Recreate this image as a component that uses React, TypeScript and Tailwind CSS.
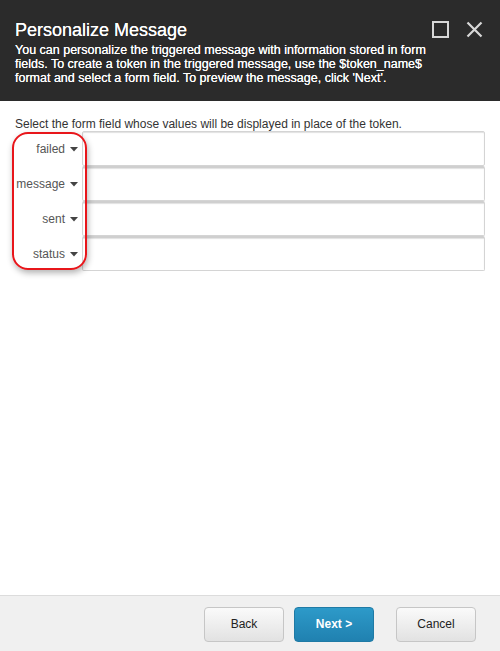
const fields = ["failed", "message", "sent", "status"];

function Caret() {
  return (
    <svg width="8" height="5" viewBox="0 0 8 5" className="ml-[5px] mt-[2px]">
      <path d="M0 0 L8 0 L4 4.5 Z" fill="#444" />
    </svg>
  );
}

export default function App() {
  return (
    <div
      className="w-[500px] h-[651px] flex flex-col bg-white overflow-hidden"
      style={{ fontFamily: '"Liberation Sans", Arial, sans-serif' }}
    >
      <header className="h-[101px] bg-[#2b2b2b] px-[15px] pt-[18px] relative shrink-0">
        <h1 className="text-[18px] leading-[24px] text-white [text-shadow:0_0_0.4px_#fff]">Personalize Message</h1>
        <p className="text-[12.5px] leading-[14px] text-white mt-[1px] w-[450px] [text-shadow:0_0_0.4px_#fff]">
          You can personalize the triggered message with information stored in form
          <br />
          fields. To create a token in the triggered message, use the $token_name$
          <br />
          format and select a form field. To preview the message, click 'Next'.
        </p>
        <div className="absolute top-[21px] right-[17px] flex items-center gap-[17px]">
          <svg width="17" height="17" viewBox="0 0 17 17">
            <rect x="1" y="1" width="15" height="15" fill="none" stroke="#d8d8d8" strokeWidth="2" />
          </svg>
          <svg width="17" height="17" viewBox="0 0 17 17">
            <path d="M1.5 1.5 L15.5 15.5 M15.5 1.5 L1.5 15.5" stroke="#d8d8d8" strokeWidth="2.2" />
          </svg>
        </div>
      </header>

      <main className="flex-1 px-[15px] pt-[16px] relative">
        <p className="text-[12px] leading-[14px] text-[#333]">
          Select the form field whose values will be displayed in place of the token.
        </p>
        <div className="flex flex-col">
          {fields.map((f, i) => (
            <div key={f} className="flex items-stretch h-[35px]">
              <div className="w-[67px] flex items-center justify-end pr-[4px] text-[12px] text-[#555]">
                {f}
                <Caret />
              </div>
              <div
                className={`flex-1 bg-white border border-[#d4d4d4] rounded-[2px] shadow-[inset_0_1px_1px_rgba(0,0,0,0.12)] ${
                  i > 0 ? "border-t-2 border-t-[#cfcfcf]" : ""
                }`}
              />
            </div>
          ))}
        </div>
        <div className="absolute left-[12px] top-[31px] w-[75px] h-[138px] rounded-[16px] border-2 border-[#e8161b] shadow-[1px_3px_6px_rgba(0,0,0,0.3)] pointer-events-none" />
      </main>

      <footer className="h-[56px] shrink-0 bg-[#f0f0f0] border-t border-[#dcdcdc] flex items-center justify-end pr-[24px] pt-[1px]">
        <button className="w-[80px] h-[35px] rounded-[4px] border border-[#c6c6c6] bg-gradient-to-b from-[#fafafa] to-[#e2e2e2] text-[12px] text-[#222]">
          Back
        </button>
        <button className="ml-[10px] w-[80px] h-[35px] rounded-[4px] border border-[#1f7aa5] bg-gradient-to-b from-[#2d9ac9] to-[#2081b0] text-[12px] font-bold text-white">
          Next &gt;
        </button>
        <button className="ml-[22px] w-[80px] h-[35px] rounded-[4px] border border-[#c6c6c6] bg-gradient-to-b from-[#fafafa] to-[#e2e2e2] text-[12px] text-[#222]">
          Cancel
        </button>
      </footer>
    </div>
  );
}
